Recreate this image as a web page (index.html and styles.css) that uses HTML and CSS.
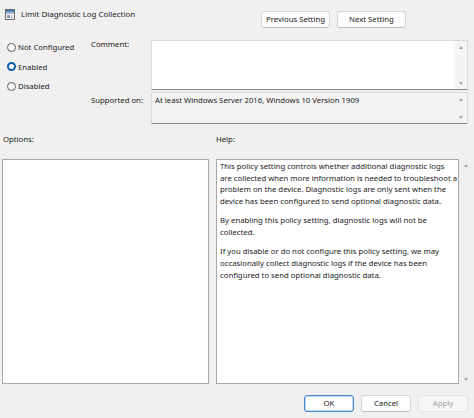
FILE: index.html
```html
<!DOCTYPE html>
<html lang="en">
<head>
<meta charset="utf-8">
<title>Limit Diagnostic Log Collection</title>
<link rel="stylesheet" href="styles.css">
</head>
<body>
<div class="dialog">
  <header class="titlebar">
    <div class="title">
      <svg class="icon" width="10" height="11" viewBox="0 0 10 11">
        <rect x="0.5" y="0.5" width="9" height="10" fill="#ffffff" stroke="#6b6b6b"/>
        <rect x="1" y="1" width="8" height="2.5" fill="#4a7fc0"/>
        <rect x="1" y="4" width="8" height="0.8" fill="#9a9a9a"/>
        <rect x="2" y="6" width="3" height="3" fill="#7d9bbf"/>
        <rect x="6" y="6.5" width="2" height="0.8" fill="#9a9a9a"/>
        <rect x="6" y="8" width="2" height="0.8" fill="#9a9a9a"/>
      </svg>
      <span class="title-text">Limit Diagnostic Log Collection</span>
    </div>
    <div class="nav">
      <button class="btn">Previous Setting</button>
      <button class="btn">Next Setting</button>
    </div>
  </header>

  <section class="top">
    <div class="states">
      <label class="radio"><span class="dot"></span>Not Configured</label>
      <label class="radio"><span class="dot checked"></span>Enabled</label>
      <label class="radio"><span class="dot"></span>Disabled</label>
    </div>
    <div class="fields">
      <div class="field-label comment-label">Comment:</div>
      <div class="box comment-box">
        <div class="box-body"></div>
        <div class="scroll"><span class="arrow up"></span><span class="arrow down"></span></div>
      </div>
      <div class="field-label supported-label">Supported on:</div>
      <div class="box supported-box">
        <div class="box-body supported-text">At least Windows Server 2016, Windows 10 Version 1909</div>
        <div class="scroll"><span class="arrow up"></span><span class="arrow down"></span></div>
      </div>
    </div>
  </section>

  <div class="section-labels">
    <span class="options-label">Options:</span>
    <span class="help-label">Help:</span>
  </div>

  <div class="panes">
    <div class="options-pane"></div>
    <div class="help-wrap">
      <div class="help-pane">
        <p>This policy setting controls whether additional diagnostic logs are collected when more information is needed to troubleshoot a problem on the device. Diagnostic logs are only sent when the device has been configured to send optional diagnostic data.</p>
        <p>By enabling this policy setting, diagnostic logs will not be collected.</p>
        <p>If you disable or do not configure this policy setting, we may occasionally collect diagnostic logs if the device has been configured to send optional diagnostic data.</p>
      </div>
      <div class="help-scroll"><span class="arrow up"></span><span class="arrow down"></span></div>
    </div>
  </div>

  <footer class="actions">
    <button class="btn btn-default">OK</button>
    <button class="btn">Cancel</button>
    <button class="btn btn-disabled">Apply</button>
  </footer>
</div>
</body>
</html>
```

FILE: styles.css
```css
* { box-sizing: border-box; }

html, body {
  margin: 0;
  padding: 0;
  background: #f0f0f0;
}

body {
  font-family: "Noto Sans", "Open Sans", sans-serif;
  font-size: 7.75px;
  color: #1b1b1b;
}

.dialog {
  width: 474px;
  height: 418px;
  display: flex;
  flex-direction: column;
  background: #f0f0f0;
}

/* Title row */
.titlebar {
  height: 40px;
  display: flex;
  align-items: flex-start;
  padding-left: 5px;
}

.title {
  display: flex;
  align-items: center;
  gap: 6px;
  margin-top: 8px;
  height: 12px;
}

.icon { display: block; flex: none; }

.title-text { font-size: 7.9px; line-height: 12px; }

.nav {
  margin-left: auto;
  margin-right: 68px;
  margin-top: 11px;
  display: flex;
  gap: 7px;
}

.btn {
  font-family: inherit;
  font-size: 7.75px;
  color: #1b1b1b;
  width: 69px;
  height: 17px;
  padding: 0;
  background: #fdfdfd;
  border: 1px solid #d6d6d6;
  border-bottom-color: #c2c2c2;
  border-radius: 3px;
  line-height: 15px;
}

/* Top section */
.top {
  display: flex;
  height: 84px;
}

.states {
  width: 91px;
  display: flex;
  flex-direction: column;
  gap: 5.5px;
  padding-left: 7px;
}

.radio {
  display: flex;
  align-items: center;
  gap: 2px;
  height: 14px;
  line-height: 14px;
}

.dot {
  width: 9px;
  height: 9px;
  border-radius: 50%;
  border: 1px solid #5c5c5c;
  background: #fafafa;
  flex: none;
}

.dot.checked {
  border: 2.6px solid #0a5cb0;
  background: #ffffff;
}

.fields {
  display: grid;
  grid-template-columns: 60px 317px;
  grid-template-rows: 50px 32px;
  row-gap: 2px;
}

.field-label { line-height: 8px; }

.supported-label { line-height: 16px; }

.box {
  display: flex;
  border: 1px solid #dadada;
  border-bottom-color: #8c8c8c;
}

.box-body { flex: 1; }

.comment-box { background: #ffffff; }
.comment-box .scroll { background: #f5f5f5; }

.supported-box {
  background: #f3f3f3;
}

.supported-text {
  padding: 1px 3px;
  line-height: 12px;
}

.scroll {
  width: 13px;
  display: flex;
  flex-direction: column;
  justify-content: space-between;
  align-items: center;
  padding: 5px 0 4px;
}

.arrow {
  width: 0;
  height: 0;
  border-left: 2.5px solid transparent;
  border-right: 2.5px solid transparent;
}

.arrow.up { border-bottom: 3.5px solid #a4a4a4; }
.arrow.down { border-top: 3.5px solid #a4a4a4; }

/* Options/Help labels */
.section-labels {
  display: flex;
  height: 18px;
  line-height: 18px;
  margin-top: 6px;
}

.options-label { width: 216px; padding-left: 3px; }

/* Panes */
.panes {
  display: flex;
  gap: 7px;
  padding-left: 2px;
  margin-top: 11px;
  height: 225px;
}

.options-pane {
  width: 207px;
  background: #ffffff;
  border: 1px solid #a9a9a9;
}

.help-wrap {
  display: flex;
}

.help-pane {
  width: 243px;
  background: #ffffff;
  border: 1px solid #a9a9a9;
  padding: 1px 0 0 3px;
  line-height: 11.7px;
}

.help-pane p { margin: 0 0 7.5px; }

.help-scroll {
  width: 14px;
  display: flex;
  flex-direction: column;
  justify-content: space-between;
  align-items: center;
  padding: 5px 0 3px;
}

/* Footer */
.actions {
  display: flex;
  justify-content: flex-end;
  gap: 7px;
  margin-top: 11px;
  padding-right: 6px;
}

.actions .btn { width: 50px; }

.btn-default {
  border: 1px solid #3f86cf;
  box-shadow: inset 0 0 0 0.5px #8fbbe6;
}

.btn-disabled {
  color: #a2a2a2;
  background: #f6f6f6;
  border-color: #e3e3e3;
}
```
